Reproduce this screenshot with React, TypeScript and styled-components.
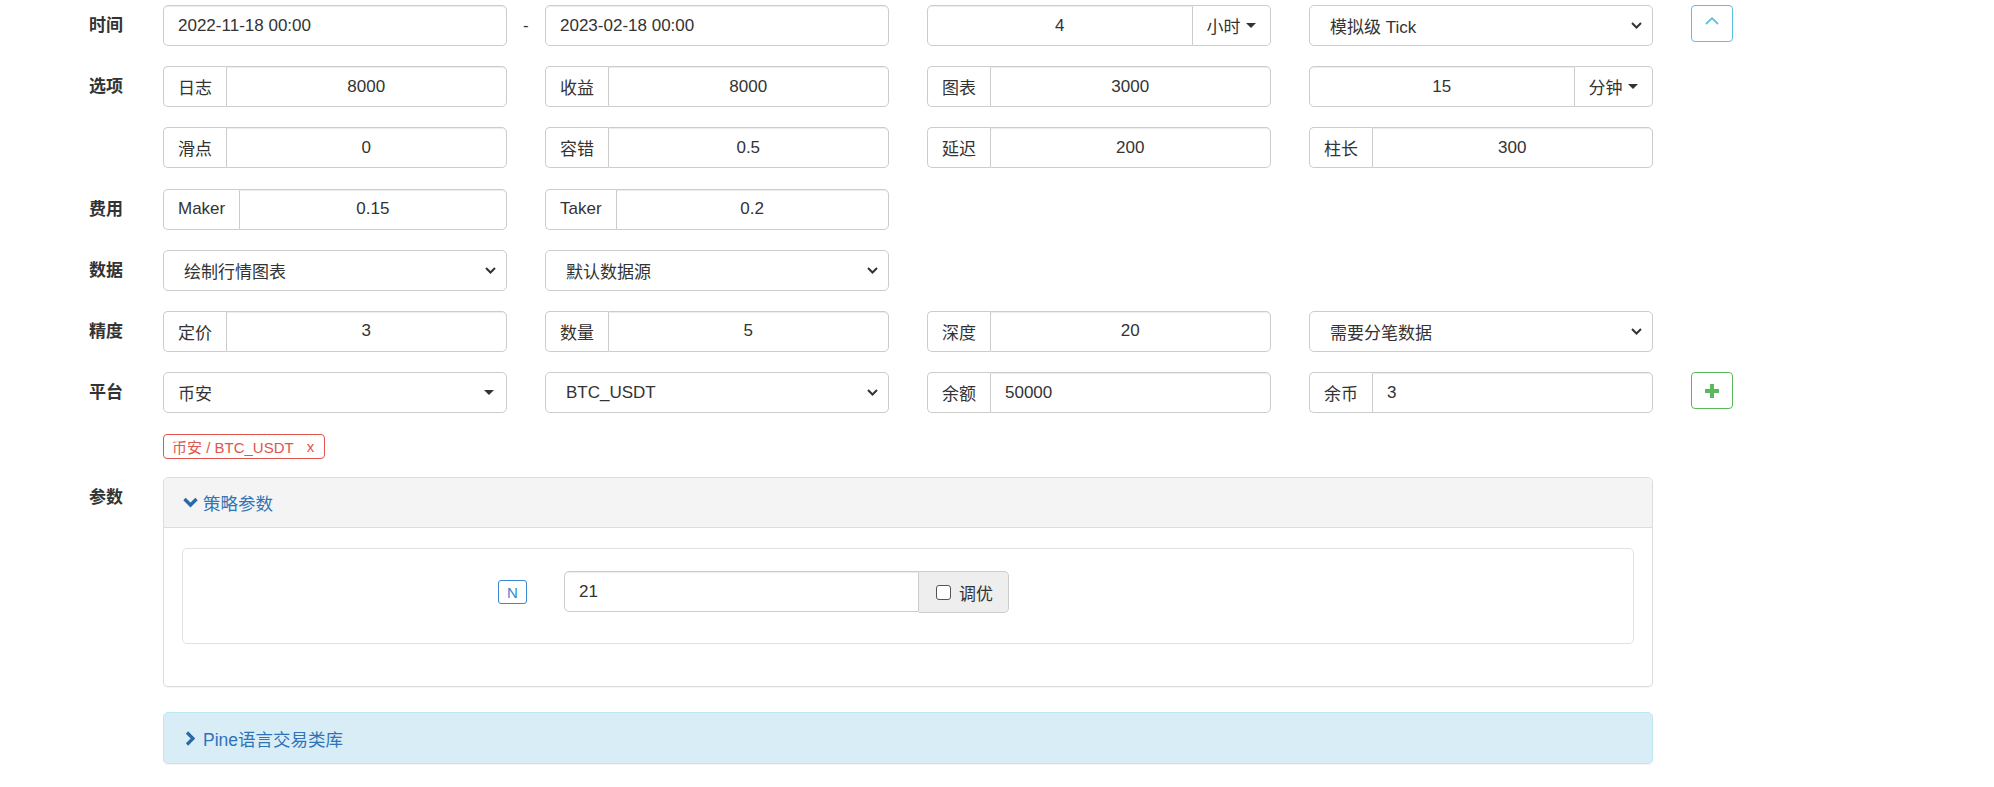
import React from 'react';
import styled, { createGlobalStyle } from 'styled-components';

const GlobalStyle = createGlobalStyle`
  * {
    box-sizing: border-box;
  }

  body {
    margin: 0;
    background: #fff;
    color: #333;
    font-family: 'Liberation Sans', 'Noto Sans CJK SC', sans-serif;
    font-size: 17px;
  }
`;

const Page = styled.div`
  padding-top: 5px;
`;

const FormRow = styled.div<{ $space?: number }>`
  display: flex;
  margin-bottom: ${({ $space = 20.2 }) => $space}px;
`;

const RowLabel = styled.label`
  flex: 0 0 163px;
  padding-left: 89px;
  font-weight: 700;
  line-height: 41px;
`;

const Fields = styled.div`
  display: grid;
  grid-template-columns: repeat(4, 343.5px) 42px;
  column-gap: 38.5px;
  align-items: start;
`;

const DateRange = styled.div`
  grid-column: span 2;
  display: grid;
  grid-template-columns: 1fr 38.5px 1fr;
  align-items: center;
`;

const Dash = styled.span`
  text-align: center;
`;

const InputGroup = styled.div`
  display: flex;
  height: 41px;
`;

const Addon = styled.span<{ $side?: 'left' | 'right' }>`
  display: flex;
  align-items: center;
  gap: 5px;
  padding: 0 14px;
  border: 1px solid #ccc;
  background: #fff;
  white-space: nowrap;
  ${({ $side = 'left' }) =>
    $side === 'left'
      ? 'border-right: 0; border-radius: 5px 0 0 5px;'
      : 'border-left: 0; border-radius: 0 5px 5px 0;'}
`;

const radiusFor = (joined?: 'left' | 'right') =>
  joined === 'left' ? '0 5px 5px 0' : joined === 'right' ? '5px 0 0 5px' : '5px';

const TextInput = styled.input<{ $align?: 'left' | 'center'; $joined?: 'left' | 'right' }>`
  flex: 1;
  min-width: 0;
  width: 100%;
  height: 41px;
  padding: 0 14px;
  border: 1px solid #ccc;
  border-radius: ${({ $joined }) => radiusFor($joined)};
  background: #fff;
  box-shadow: inset 0 1px 1px rgba(0, 0, 0, 0.075);
  font: inherit;
  color: #333;
  text-align: ${({ $align = 'center' }) => $align};
  outline: none;
`;

const SelectBox = styled.div<{ $inset?: number; $end?: number }>`
  display: flex;
  align-items: center;
  justify-content: space-between;
  height: 41px;
  padding: 0 ${({ $end = 10 }) => $end}px 0 ${({ $inset = 20 }) => $inset}px;
  border: 1px solid #ccc;
  border-radius: 5px;
  background: #fff;
  color: #333;
`;

const Caret = styled.span`
  display: inline-block;
  width: 0;
  height: 0;
  border-top: 5px solid #333;
  border-left: 5px solid transparent;
  border-right: 5px solid transparent;
`;

const IconButton = styled.button<{ $tone: string }>`
  display: flex;
  align-items: center;
  justify-content: center;
  width: 42px;
  height: 37px;
  padding: 0;
  border: 1px solid ${({ $tone }) => $tone};
  border-radius: 4px;
  background: #fff;
  color: ${({ $tone }) => $tone};
`;

const Tag = styled.span`
  display: inline-flex;
  align-items: center;
  justify-self: start;
  height: 25px;
  padding: 0 10px 0 8px;
  border: 1px solid #e0554d;
  border-radius: 4px;
  color: #e0554d;
  font-size: 15px;
  white-space: nowrap;
`;

const TagClose = styled.span`
  margin-left: 13px;
`;

const Panel = styled.section<{ $tone?: 'default' | 'info' }>`
  grid-column: 1 / 5;
  border: 1px solid ${({ $tone }) => ($tone === 'info' ? '#bce8f1' : '#ddd')};
  border-radius: 5px;
  background: ${({ $tone }) => ($tone === 'info' ? '#d9edf7' : '#fff')};
  box-shadow: 0 1px 1px rgba(0, 0, 0, 0.05);
  overflow: hidden;
`;

const PanelHeading = styled.div<{ $tone?: 'default' | 'info' }>`
  display: flex;
  align-items: center;
  gap: 5px;
  height: 50px;
  padding: 0 18px;
  background: ${({ $tone }) => ($tone === 'info' ? '#d9edf7' : '#f4f4f4')};
  border-bottom: ${({ $tone }) => ($tone === 'info' ? '0' : '1px solid #ddd')};
  color: #2f74b8;
  font-size: 17.5px;
`;

const HeadingIcon = styled.span`
  display: flex;
  align-items: center;
  justify-content: center;
  width: 16px;
  color: #2a68a8;
`;

const PanelBody = styled.div`
  padding: 20px 18px 42px;
`;

const Well = styled.div`
  padding: 22px 0 30px;
  border: 1px solid #e0e0e0;
  border-radius: 5px;
  background: #fff;
`;

const ParamRow = styled.div`
  display: flex;
  align-items: center;
`;

const ParamName = styled.div`
  display: flex;
  justify-content: flex-end;
  width: 344px;
  margin-right: 37px;
`;

const Badge = styled.span`
  display: flex;
  align-items: center;
  justify-content: center;
  width: 29px;
  height: 24px;
  border: 1px solid #3a86cf;
  border-radius: 3px;
  color: #3a86cf;
  font-size: 15px;
`;

const ParamGroup = styled.div`
  display: flex;
  width: 445px;
  height: 42px;
`;

const TuneAddon = styled.label`
  display: flex;
  align-items: center;
  gap: 8px;
  padding: 0 15px 0 17px;
  border: 1px solid #ccc;
  border-left: 0;
  border-radius: 0 5px 5px 0;
  background: #eee;
  white-space: nowrap;
`;

const CheckBox = styled.span`
  width: 15px;
  height: 15px;
  border: 1.5px solid #555;
  border-radius: 3px;
  background: #fff;
`;

const SelectChevron = () => (
  <svg width="11" height="7" viewBox="0 0 11 7">
    <polyline points="1,1 5.5,5.5 10,1" fill="none" stroke="#333" strokeWidth="2" />
  </svg>
);

const ChevronUp = () => (
  <svg width="14" height="8" viewBox="0 0 14 8" style={{ marginBottom: 5 }}>
    <polyline points="1,7 7,1.2 13,7" fill="none" stroke="currentColor" strokeWidth="1.8" />
  </svg>
);

const Plus = () => (
  <svg width="14" height="14" viewBox="0 0 14 14">
    <rect x="0" y="5" width="14" height="4" fill="currentColor" />
    <rect x="5" y="0" width="4" height="14" fill="currentColor" />
  </svg>
);

const ChevronDownBold = () => (
  <svg width="15" height="11" viewBox="0 0 15 11">
    <polyline points="1.5,2 7.5,8 13.5,2" fill="none" stroke="currentColor" strokeWidth="3.4" />
  </svg>
);

const ChevronRightBold = () => (
  <svg width="10" height="15" viewBox="0 0 10 15">
    <polyline points="2,1.5 8,7.5 2,13.5" fill="none" stroke="currentColor" strokeWidth="3.2" />
  </svg>
);

type FieldProps = { addon: string; value: string; align?: 'left' | 'center' };

const AddonField = ({ addon, value, align = 'center' }: FieldProps) => (
  <InputGroup>
    <Addon>{addon}</Addon>
    <TextInput readOnly defaultValue={value} $align={align} $joined="left" />
  </InputGroup>
);

const UnitField = ({ value, unit }: { value: string; unit: string }) => (
  <InputGroup>
    <TextInput readOnly defaultValue={value} $joined="right" />
    <Addon $side="right">
      {unit}
      <Caret />
    </Addon>
  </InputGroup>
);

const Select = ({ label }: { label: string }) => (
  <SelectBox>
    <span>{label}</span>
    <SelectChevron />
  </SelectBox>
);

export default function App() {
  return (
    <Page>
      <GlobalStyle />

      <FormRow>
        <RowLabel>时间</RowLabel>
        <Fields>
          <DateRange>
            <TextInput readOnly defaultValue="2022-11-18 00:00" $align="left" />
            <Dash>-</Dash>
            <TextInput readOnly defaultValue="2023-02-18 00:00" $align="left" />
          </DateRange>
          <UnitField value="4" unit="小时" />
          <Select label="模拟级 Tick" />
          <IconButton $tone="#5bc0de">
            <ChevronUp />
          </IconButton>
        </Fields>
      </FormRow>

      <FormRow>
        <RowLabel>选项</RowLabel>
        <Fields>
          <AddonField addon="日志" value="8000" />
          <AddonField addon="收益" value="8000" />
          <AddonField addon="图表" value="3000" />
          <UnitField value="15" unit="分钟" />
        </Fields>
      </FormRow>

      <FormRow>
        <RowLabel />
        <Fields>
          <AddonField addon="滑点" value="0" />
          <AddonField addon="容错" value="0.5" />
          <AddonField addon="延迟" value="200" />
          <AddonField addon="柱长" value="300" />
        </Fields>
      </FormRow>

      <FormRow>
        <RowLabel>费用</RowLabel>
        <Fields>
          <AddonField addon="Maker" value="0.15" />
          <AddonField addon="Taker" value="0.2" />
        </Fields>
      </FormRow>

      <FormRow>
        <RowLabel>数据</RowLabel>
        <Fields>
          <Select label="绘制行情图表" />
          <Select label="默认数据源" />
        </Fields>
      </FormRow>

      <FormRow>
        <RowLabel>精度</RowLabel>
        <Fields>
          <AddonField addon="定价" value="3" />
          <AddonField addon="数量" value="5" />
          <AddonField addon="深度" value="20" />
          <Select label="需要分笔数据" />
        </Fields>
      </FormRow>

      <FormRow $space={21}>
        <RowLabel>平台</RowLabel>
        <Fields>
          <SelectBox $inset={14} $end={12}>
            <span>币安</span>
            <Caret />
          </SelectBox>
          <Select label="BTC_USDT" />
          <AddonField addon="余额" value="50000" align="left" />
          <AddonField addon="余币" value="3" align="left" />
          <IconButton $tone="#5cb85c">
            <Plus />
          </IconButton>
        </Fields>
      </FormRow>

      <FormRow $space={18}>
        <RowLabel />
        <Fields>
          <Tag>
            币安 / BTC_USDT
            <TagClose>x</TagClose>
          </Tag>
        </Fields>
      </FormRow>

      <FormRow $space={25}>
        <RowLabel>参数</RowLabel>
        <Fields>
          <Panel>
            <PanelHeading>
              <HeadingIcon>
                <ChevronDownBold />
              </HeadingIcon>
              策略参数
            </PanelHeading>
            <PanelBody>
              <Well>
                <ParamRow>
                  <ParamName>
                    <Badge>N</Badge>
                  </ParamName>
                  <ParamGroup>
                    <TextInput readOnly defaultValue="21" $align="left" $joined="right" />
                    <TuneAddon>
                      <CheckBox />
                      调优
                    </TuneAddon>
                  </ParamGroup>
                </ParamRow>
              </Well>
            </PanelBody>
          </Panel>
        </Fields>
      </FormRow>

      <FormRow>
        <RowLabel />
        <Fields>
          <Panel $tone="info">
            <PanelHeading $tone="info">
              <HeadingIcon>
                <ChevronRightBold />
              </HeadingIcon>
              Pine语言交易类库
            </PanelHeading>
          </Panel>
        </Fields>
      </FormRow>
    </Page>
  );
}
